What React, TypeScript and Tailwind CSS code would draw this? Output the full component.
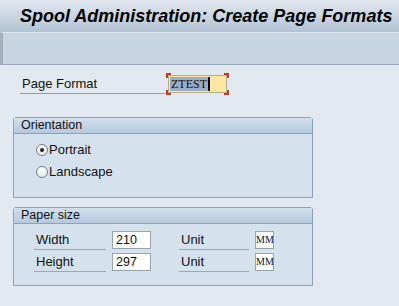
import React from "react";

const sans = { fontFamily: '"Liberation Sans", Arial, sans-serif' };

function Corner({ pos }: { pos: string }) {
  return <span className={`absolute w-[5px] h-[5px] border-[#c0392b] ${pos}`} />;
}

function GroupBox({ title, children, bodyClass }: { title: string; children: React.ReactNode; bodyClass: string }) {
  return (
    <div className="mx-[13px] w-[300px] border border-[#8ba3bd] rounded-t-[3px] bg-[#d5e1ed]">
      <div className="h-[16px] border-b border-[#8ba3bd] bg-gradient-to-b from-[#d3e0ed] to-[#b5c9de] pl-[7px] text-[12.5px] leading-[15px] text-[#111]">
        {title}
      </div>
      <div className={bodyClass}>{children}</div>
    </div>
  );
}

function Radio({ checked, label }: { checked: boolean; label: string }) {
  return (
    <div className="flex items-center h-[22px] pl-[22px]">
      <span className="w-[12px] h-[12px] rounded-full border border-[#6f7f8f] bg-gradient-to-b from-[#ffffff] to-[#e6e9ec] flex items-center justify-center">
        {checked && <span className="w-[4px] h-[4px] rounded-full bg-[#222]" />}
      </span>
      <span className="ml-[1px] text-[13px] text-[#111]">{label}</span>
    </div>
  );
}

function SizeRow({ label, value }: { label: string; value: string }) {
  return (
    <div className="flex items-center h-[22px]">
      <div className="ml-[20px] w-[72px] border-b border-[#9aa8b6] h-[19px] pl-[2px] text-[13px] leading-[18px] text-[#111]">{label}</div>
      <div className="ml-[6px] w-[39px] h-[18px] border border-[#9aa4ae] bg-white text-[12.5px] leading-[16px] pl-[3px] text-[#111]">{value}</div>
      <div className="ml-[28px] w-[70px] border-b border-[#9aa8b6] h-[19px] pl-[2px] text-[13px] leading-[18px] text-[#111]">Unit</div>
      <div className="ml-[6px] w-[19px] h-[18px] border border-[#9aa4ae] bg-white text-[10px] leading-[16px] text-center text-[#111]" style={{ fontFamily: '"Liberation Serif", serif' }}>MM</div>
    </div>
  );
}

export default function App() {
  return (
    <div className="w-[399px] h-[306px] overflow-hidden bg-[#e3e9f0] flex flex-col" style={sans}>
      <div className="h-[32px] bg-gradient-to-b from-[#e2e8ef] to-[#b3c3d4] flex items-center pl-[20px] whitespace-nowrap">
        <span className="text-[18px] font-bold italic text-black">
          Spool Administration: Create Page Formats
        </span>
      </div>
      <div className="h-[33px] bg-[#c8d5e2] border-t border-[#dde5ee] border-b border-b-[#9aa8b7] border-l-[3px] border-l-[#a4b0bc]" />
      <div className="flex-1 flex flex-col">
        <div className="flex items-center mt-[10px] h-[18px]">
          <div className="ml-[20px] w-[145px] border-b border-[#8f9eae] h-[19px] pl-[2px] text-[13px] leading-[18px] text-[#111]">Page Format</div>
          <div className="relative ml-[3px] w-[59px] h-[18px] bg-[#fbe7a3] border border-[#b9ad84] flex items-center">
            <span className="bg-[#9aadc6] h-[14px] ml-[1px] pl-[1px] pr-[1px] text-[12px] leading-[14px] text-[#111]" style={{ fontFamily: '"Liberation Serif", serif' }}>ZTEST</span>
            <span className="w-[2px] h-[14px] bg-black" />
            <Corner pos="-top-[3px] -left-[3px] border-t-2 border-l-2" />
            <Corner pos="-top-[3px] -right-[3px] border-t-2 border-r-2" />
            <Corner pos="-bottom-[3px] -left-[3px] border-b-2 border-l-2" />
            <Corner pos="-bottom-[3px] -right-[3px] border-b-2 border-r-2" />
          </div>
        </div>
        <div className="mt-[24px]">
          <GroupBox title="Orientation" bodyClass="h-[63px] pt-[5px]">
            <Radio checked label="Portrait" />
            <Radio checked={false} label="Landscape" />
          </GroupBox>
        </div>
        <div className="mt-[9px]">
          <GroupBox title="Paper size" bodyClass="h-[61px] pt-[5px]">
            <SizeRow label="Width" value="210" />
            <SizeRow label="Height" value="297" />
          </GroupBox>
        </div>
      </div>
    </div>
  );
}
